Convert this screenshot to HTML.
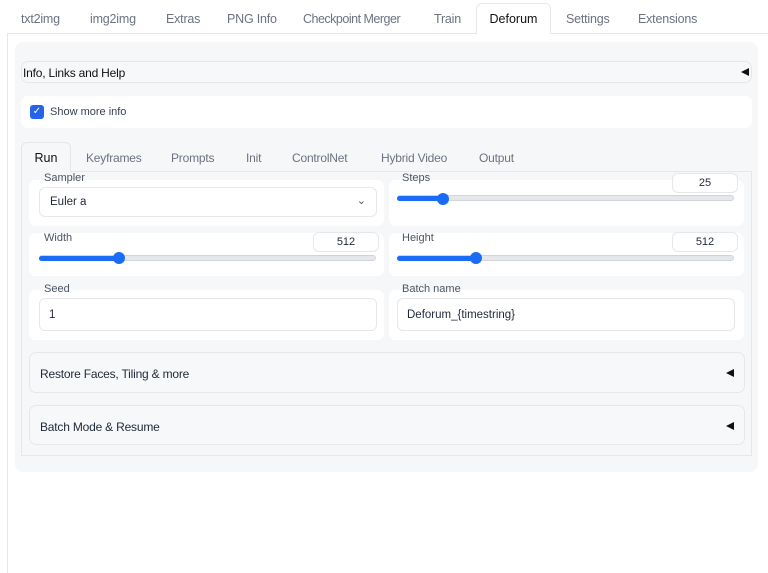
<!DOCTYPE html>
<html><head><style>
*{box-sizing:border-box;margin:0;padding:0}
body{width:768px;height:562px;background:#fff;font-family:"Liberation Sans",sans-serif;position:relative;overflow:hidden;color:#1f2937}
.a{position:absolute}
.tab{position:absolute;top:12px;font-size:12.5px;color:#6b7280;letter-spacing:-0.2px}
.st{position:absolute;font-size:12px;color:#6b7280;top:151px;letter-spacing:-0.2px}
.lbl{position:absolute;font-size:11px;color:#4b5563}
.blk{position:absolute;background:#fff;border-radius:7px}
.inp{position:absolute;background:#fff;border:1px solid #e5e7eb;border-radius:6px;font-size:11.5px;color:#1f2937}
.num{position:absolute;background:#fff;border:1px solid #e5e7eb;border-radius:6px;font-size:11px;text-align:center;width:66px;height:20px;line-height:18px}
.trk{position:absolute;height:6px;background:#e5e7eb;border:1px solid #d1d5db;border-radius:3px}
.fill{position:absolute;height:5px;background:#1a6cf5;border-radius:3px}
.knob{position:absolute;width:12px;height:12px;border-radius:50%;background:#1a6cf5}
.acc{position:absolute;background:#f7f8f9;border:1px solid #e5e7eb;border-radius:7px;font-size:12px;color:#1f2937;letter-spacing:-0.2px}
.tri{position:absolute;right:10px;width:0;height:0;border-top:4px solid transparent;border-bottom:4px solid transparent;border-right:8px solid #111}
</style></head><body>
<div class="tab" style="left:21px">txt2img</div>
<div class="tab" style="left:90px">img2img</div>
<div class="tab" style="left:166px">Extras</div>
<div class="tab" style="left:227px">PNG Info</div>
<div class="tab" style="left:303px;letter-spacing:-0.5px">Checkpoint Merger</div>
<div class="tab" style="left:434px">Train</div>
<div class="tab" style="left:566px">Settings</div>
<div class="tab" style="left:638px">Extensions</div>
<div class="a" style="left:7px;top:33px;width:770px;height:540px;border-left:1px solid #e5e7eb;border-top:1px solid #e5e7eb"></div>
<div class="a" style="left:476px;top:3px;width:75px;height:31px;background:#fff;border:1px solid #e5e7eb;border-bottom:none;border-radius:6px 6px 0 0;font-size:12.5px;color:#111;text-align:center;line-height:31px">Deforum</div>
<div class="a" style="left:15px;top:42px;width:743px;height:430px;background:#f6f7f8;border-radius:8px"></div>
<div class="acc" style="left:21px;top:61px;width:731px;height:22px;font-size:12px;padding:4px 0 0 1px;color:#111;background:#f7f8f9">Info, Links and Help<div class="tri" style="right:2px;top:6px"></div></div>
<div class="blk" style="left:21px;top:96px;width:731px;height:32px"></div>
<div class="a" style="left:30px;top:105px;width:14px;height:14px;background:#2563eb;border-radius:3px;color:#fff;font-size:10px;text-align:center;line-height:14px">✓</div>
<div class="a" style="left:50px;top:106px;font-size:11px;color:#374151">Show more info</div>
<div class="a" style="left:21px;top:171px;width:731px;height:285px;border:1px solid #e5e7eb"></div>
<div class="a" style="left:21px;top:142px;width:50px;height:31px;background:#f6f7f8;border:1px solid #e5e7eb;border-bottom:none;border-radius:6px 6px 0 0;font-size:12.5px;color:#111;text-align:center;line-height:30px">Run</div>
<div class="st" style="left:86px">Keyframes</div>
<div class="st" style="left:171px">Prompts</div>
<div class="st" style="left:246px">Init</div>
<div class="st" style="left:292px">ControlNet</div>
<div class="st" style="left:381px">Hybrid Video</div>
<div class="st" style="left:479px">Output</div>
<div class="blk" style="left:29px;top:180px;width:355px;height:46px"></div>
<div class="lbl" style="left:44px;top:172px">Sampler</div>
<div class="inp" style="left:39px;top:187px;width:338px;height:30px;padding:8px 10px">Euler a<span style="position:absolute;right:10px;top:6px;color:#555;font-size:11px">⌄</span></div>
<div class="blk" style="left:389px;top:180px;width:355px;height:46px"></div>
<div class="lbl" style="left:402px;top:172px">Steps</div>
<div class="num" style="left:672px;top:173px">25</div>
<div class="trk" style="left:397px;top:195px;width:337px"></div><div class="fill" style="left:397px;top:196px;width:45px"></div><div class="knob" style="left:437px;top:193px"></div>
<div class="blk" style="left:29px;top:233px;width:355px;height:43px"></div>
<div class="lbl" style="left:44px;top:232px">Width</div>
<div class="num" style="left:313px;top:232px">512</div>
<div class="trk" style="left:39px;top:255px;width:337px"></div><div class="fill" style="left:39px;top:256px;width:80px"></div><div class="knob" style="left:113px;top:252px"></div>
<div class="blk" style="left:389px;top:233px;width:355px;height:43px"></div>
<div class="lbl" style="left:402px;top:232px">Height</div>
<div class="num" style="left:672px;top:232px">512</div>
<div class="trk" style="left:397px;top:255px;width:337px"></div><div class="fill" style="left:397px;top:256px;width:80px"></div><div class="knob" style="left:470px;top:252px"></div>
<div class="blk" style="left:29px;top:290px;width:355px;height:50px"></div>
<div class="lbl" style="left:44px;top:283px">Seed</div>
<div class="inp" style="left:39px;top:298px;width:338px;height:33px;padding:10px 9px">1</div>
<div class="blk" style="left:389px;top:290px;width:355px;height:50px"></div>
<div class="lbl" style="left:402px;top:283px">Batch name</div>
<div class="inp" style="left:397px;top:298px;width:338px;height:33px;padding:10px 9px">Deforum_{timestring}</div>
<div class="acc" style="left:29px;top:352px;width:716px;height:41px;padding:14px 10px">Restore Faces, Tiling &amp; more<div class="tri" style="top:16px"></div></div>
<div class="acc" style="left:29px;top:405px;width:716px;height:40px;padding:14px 10px">Batch Mode &amp; Resume<div class="tri" style="top:16px"></div></div>
</body></html>
